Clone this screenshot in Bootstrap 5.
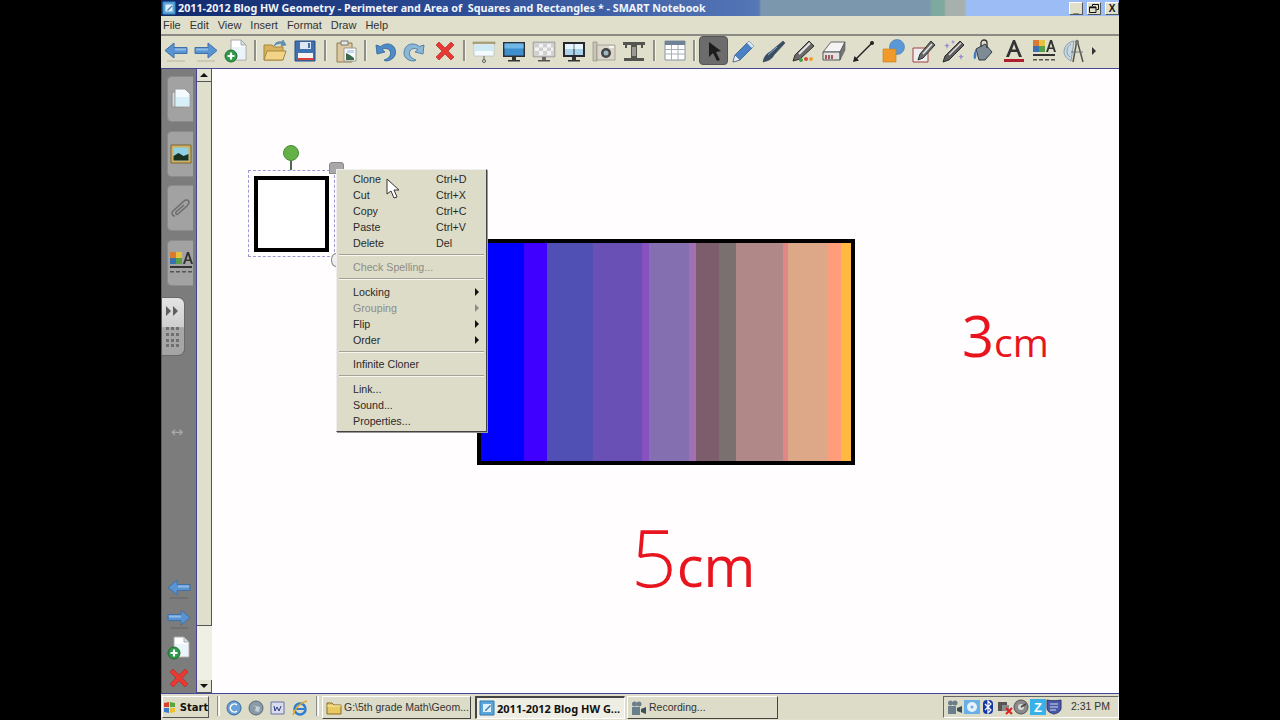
<!DOCTYPE html>
<html lang="en">
<head>
  <meta charset="UTF-8">
  <meta name="viewport" content="width=device-width, initial-scale=1.0">
  <title>SMART Notebook</title>
  <link href="https://cdn.jsdelivr.net/npm/bootstrap@5.3.0/dist/css/bootstrap.min.css" rel="stylesheet">
  <style>
    body {
      background: #000;
      height: 720px;
      overflow: hidden;
      font-family: "Liberation Sans", sans-serif;
      font-size: 11px;
      color: #222;
    }
    .app-window { width: 958px; height: 720px; background: #dfdfcb; }
    .title-bar {
      height: 16px;
      padding-left: 1px;
      color: #f2f4fa;
      font: bold 10.75px "Noto Sans", sans-serif;
      background: linear-gradient(90deg, #10296b 0, #2a4a94 280px, #5375b6 590px, #5a7ab6 598px, #7b97ae 600px, #7b97ae 768px, #7ea99f 772px, #7ea99f 783px, #a8b0ae 785px, #a8b0ae 803px, #9cbcf5 806px);
    }
    .title-icon { margin-right: 2px; }
    .title-btn {
      width: 14px; height: 13px;
      background: #dfdfcb;
      border: 1px solid;
      border-color: #fff #555 #555 #fff;
      color: #111;
      font: bold 10px/11px "Liberation Sans", sans-serif;
      text-align: center;
    }
    .menu-bar { height: 18px; padding-left: 2px; gap: 9px; font-size: 11px; color: #333; }
    .tool-bar {
      height: 35px;
      padding: 0 0 3px 3px;
      gap: 6px;
      border-top: 2px solid #8b8b84;
      border-bottom: 1px solid #45459a;
      background: #dfdfcb;
    }
    .tb-icon { width: 24px; height: 24px; flex: none; }
    .tb-sep { width: 3px; height: 21px; flex: none; border-left: 2px solid #8f8f88; border-right: 1px solid #f3f3e8; }
    .tb-sep-wide { margin: 0 1px; }
    .tb-active {
      width: 29px; height: 29px; flex: none;
      margin: 0 -2px 0 -3px;
      background: #6c6c6c;
      border: 1px solid #555;
      border-radius: 4px;
    }
    .tb-more { width: 0; height: 0; border-left: 4px solid #333; border-top: 4px solid transparent; border-bottom: 4px solid transparent; }
    .main-area { height: 624px; }
    .side-panel {
      width: 35px; flex: none;
      padding: 7px 0 3px;
      background: #7c7c7c;
      border-left: 1px solid #5c5c5c;
    }
    .side-tab {
      width: 26px; height: 46px;
      margin: 0 0 8.5px 5px;
      background: #a2a2a2;
      border: 1px solid #8c8c8c;
      border-right: 0;
      border-radius: 5px 0 0 5px;
    }
    .side-pull {
      width: 23px; height: 59px;
      margin-top: 3px;
      background: linear-gradient(#e4e4e4 0, #cfcfcf 50%, #a8a8a8 52%, #a4a4a4 100%);
      border: 1px solid #6a6a6a;
      border-left: 0;
      border-radius: 0 7px 7px 0;
    }
    .side-resize { height: 18px; margin: 67px 4px 0 0; color: #a9a9a9; font: 15px "DejaVu Sans", sans-serif; }
    .side-nav { gap: 6px; }
    .side-nav svg { width: 24px; height: 24px; }
    .scroll-bar { width: 16px; flex: none; background: #efefe3; border-left: 1px solid #45459a; }
    .scroll-btn {
      height: 13px;
      background: #e4e4d4;
      border-bottom: 1px solid #555;
      border-right: 1px solid #555;
    }
    .scroll-arrow-up { border-left: 4px solid transparent; border-right: 4px solid transparent; border-bottom: 4px solid #111; }
    .scroll-arrow-down { border-left: 4px solid transparent; border-right: 4px solid transparent; border-top: 4px solid #111; }
    .scroll-thumb {
      height: 544px;
      background: #dfdfcb;
      border-right: 1px solid #555;
      border-bottom: 1px solid #555;
    }
    .paper { position: relative; background: #fffdfe; overflow: hidden; border-top: 0; }
    .select-box { position: absolute; left: 36px; top: 101px; width: 87px; height: 87px; border: 1px dashed #9a9ad6; }
    .sq-shape { position: absolute; left: 42px; top: 107px; width: 75px; height: 76px; background: #fff; border: 4px solid #000; }
    .rot-handle { position: absolute; left: 71px; top: 76px; width: 16px; height: 16px; border-radius: 50%; background: #64b247; border: 1px solid #4c8a38; }
    .rot-stem { position: absolute; left: 78px; top: 91px; width: 2px; height: 10px; background: #4f6a52; }
    .menu-handle { position: absolute; left: 117px; top: 93px; width: 15px; height: 12px; background: #a8a8a8; border: 1px solid #888; border-radius: 3px 3px 0 0; }
    .size-handle { position: absolute; left: 119px; top: 184px; width: 10px; height: 14px; border: 1px solid #888; border-radius: 50%; background: #eee; }
    .grad-box {
      position: absolute;
      left: 265px; top: 170px;
      width: 378px; height: 226px;
      border: 4px solid #000;
      background: linear-gradient(90deg,
        #0000ff 0 43px, #3f00ff 43px 66px, #5050b4 66px 112px, #6850b4 112px 161px,
        #8850c0 161px 168px, #8470b0 168px 208px, #a070b0 208px 215px, #7d5c6c 215px 238px,
        #7a7070 238px 255px, #b08888 255px 302px, #e08888 302px 307px, #dca888 307px 347px,
        #ff9c7c 347px 360px, #ffb840 360px);
    }
    .ink-note { position: absolute; color: #e8141e; font-family: "Open Sans", sans-serif; font-weight: 300; line-height: 1; white-space: nowrap; }
    .ink-three { left: 750px; top: 238px; font-size: 56px; font-weight: 400; }
    .ink-three span { font-size: 39px; }
    .ink-five { left: 419px; top: 447px; font-size: 80px; }
    .ink-five span { font-size: 56px; font-weight: 400; }
    .ctx-menu {
      position: absolute;
      left: 124px; top: 100px;
      width: 151px;
      padding: 1px 0 2px;
      background: #dddcc9;
      border-right: 1px solid #444;
      border-bottom: 1px solid #444;
      border-top: 1px solid #eee;
      border-left: 1px solid #eee;
      color: #2a2a2a;
      font-size: 10.7px;
      list-style: none;
      margin: 0;
      box-shadow: 1px 1px 0 #999;
    }
    .ctx-item { height: 16px; line-height: 16px; padding-left: 16px; position: relative; white-space: nowrap; }
    .ctx-key { position: absolute; left: 99px; }
    .ctx-off { color: #8d8d86; }
    .ctx-rule { height: 2px; margin: 3px 2px 3px; background: #a2a298; border-bottom: 1px solid #f7f7ee; }
    .ctx-rule-tall { margin-bottom: 4px; }
    .ctx-sub::after {
      content: ""; position: absolute; left: 138px; top: 4px;
      border-left: 4px solid #111; border-top: 4px solid transparent; border-bottom: 4px solid transparent;
    }
    .ctx-off.ctx-sub::after { border-left-color: #8d8d86; }
    .mouse-arrow { position: absolute; left: 174px; top: 109px; width: 14px; height: 21px; }
    .task-bar {
      height: 26px;
      border-top: 1px solid #45459a;
      background: #dcdcc8;
      padding-top: 2px;
      font-size: 10.5px;
    }
    .start-btn {
      width: 47px; height: 22px;
      margin-left: 1px;
      border: 1px solid; border-color: #fff #555 #555 #fff;
      font: bold 10px "DejaVu Sans", sans-serif;
      color: #111;
    }
    .start-btn svg { flex: none; }
    .task-sep { width: 3px; height: 20px; flex: none; border-left: 1px solid #8f8f88; border-right: 1px solid #fff; background: #eeeee2; }
    .task-btn {
      width: 149px; height: 23px;
      padding-left: 3px;
      gap: 2px;
      flex: none;
      border: 1px solid; border-color: #fff #444 #444 #fff;
      color: #333;
      white-space: nowrap;
      overflow: hidden;
    }
    .task-btn svg { flex: none; }
    .task-active {
      width: 150px;
      margin: 0 2px 0 4px;
      padding-left: 2px;
      border-color: #444 #fff #fff #444;
      border-width: 2px 1px 1px 2px;
      background: #eeeee4;
      color: #111;
      font: bold 11px "Noto Sans", sans-serif;
    }
    .task-rec { width: 151px; }
    .tray-box {
      width: 176px; height: 22px;
      padding-left: 3px;
      border: 1px solid; border-color: #666 #fff #fff #666;
      color: #333;
      white-space: nowrap;
    }
    .tray-box svg { width: 16px; height: 16px; flex: none; margin-right: .5px; }
    .quick-sep-l { margin: 0 6px 0 8px; }
    .quick-sep-r { margin: 0 3px 0 8px; }
    .quick-row { gap: 6px; }
    .quick-row svg { width: 16px; height: 16px; flex: none; }
  </style>
</head>
<body class="m-0">
  <svg class="d-none">
    <symbol id="i-back" viewBox="0 0 24 24"><path d="M1 11.500 10 4v4.500h13v6H10V19z" fill="#5a93d2" stroke="#3f70a8"/><path d="M11 9.500h11v2H11z" fill="#8fbbe6"/><path d="M3 22h18" stroke="#000" stroke-opacity=".12" stroke-width="1.500"/></symbol>
    <symbol id="i-fwd" viewBox="0 0 24 24"><path d="M23 11.500 14 4v4.500H1v6h13V19z" fill="#5a93d2" stroke="#3f70a8"/><path d="M2 9.500h12v2H2z" fill="#8fbbe6"/><path d="M3 22h18" stroke="#000" stroke-opacity=".12" stroke-width="1.500"/></symbol>
    <symbol id="i-new" viewBox="0 0 24 24"><path d="M7 1h10l5 5v15H7z" fill="#fff" stroke="#a8a8a8"/><path d="M17 1v5h5z" fill="#cfe4f3" stroke="#a8a8a8"/><path d="M8 8h13v12H8z" fill="#eaf4fb"/><circle cx="7" cy="17" r="6" fill="#2f9a4a" stroke="#1f6f34"/><path d="M3.500 17h7M7 13.500v7" stroke="#fff" stroke-width="2.200"/></symbol>
    <symbol id="i-x" viewBox="0 0 24 24"><path d="M3 6l3-3 6 6 6-6 3 3-6 6 6 6-3 3-6-6-6 6-3-3 6-6z" fill="#e63a33" stroke="#b82a28" stroke-width=".7"/></symbol>
    <symbol id="i-folder" viewBox="0 0 24 24"><path d="M1 6h8l2 2h9v13H1z" fill="#d9b35c" stroke="#a5873f"/><path d="M1 21l3-9h19l-3 9z" fill="#f1d488" stroke="#a5873f"/><path d="M11 7c1-4 5-5 8-4l1-2 3 5-5 1 1-2c-3-1-6 0-8 2z" fill="#5f93b8" stroke="#3f6c90" stroke-width=".5"/></symbol>
    <symbol id="i-save" viewBox="0 0 24 24"><path d="M2 2h20v20H2z" fill="#3f70b0" stroke="#2a4f84"/><path d="M7 3h11v7H7z" fill="#dfe8f2"/><path d="M15 4h2v5h-2z" fill="#3f70b0"/><path d="M5 14h15v7H5z" fill="#f4f4f4"/><path d="M5 19h15v2H5z" fill="#d8413c"/></symbol>
    <symbol id="i-paste" viewBox="0 0 24 24"><path d="M3 4h15v19H3z" fill="#dcc9a0" stroke="#8e7a52"/><path d="M7 2h7v4H7z" fill="#e8e8e8" stroke="#777"/><path d="M10 9h12v13H10z" fill="#fbfbfb" stroke="#9a9a9a"/><path d="M12 14l4 2 4 3v2h-8z" fill="#3b6a4a"/><path d="M13 11h7v3h-7z" fill="#bcd8ea"/></symbol>
    <symbol id="i-undo" viewBox="0 0 24 24"><path d="M3 6l1 9 8-2-3-2.500c3-2 8-1 8.500 3 .4 3.500-2 6-6.500 7.500l2 1c6-.5 10-4.500 9.500-9.500C22 5 14 2.500 7.500 7.500z" fill="#4c8ac8" stroke="#2f5f94" stroke-width=".8"/></symbol>
    <symbol id="i-redo" viewBox="0 0 24 24"><path d="M21 6l-1 9-8-2 3-2.500c-3-2-8-1-8.500 3-.4 3.500 2 6 6.500 7.500l-2 1C4.500 22 .5 18 1 13 2 5 10 2.500 16.500 7.500z" fill="#8cb8d8" stroke="#3f6f9c" stroke-width=".8"/></symbol>
    <symbol id="i-screen" viewBox="0 0 24 24"><path d="M1 3h22v2H1z" fill="#b8a878" stroke="#8a7c58" stroke-width=".5"/><path d="M2 5h20v12H2z" fill="#f4fbff" stroke="#a8b8bc" stroke-width=".6"/><path d="M3 6h18v6H3z" fill="#cfeaf5"/><path d="M12 17v4" stroke="#666"/><circle cx="12" cy="22" r="1.500" fill="#eee" stroke="#555"/></symbol>
    <symbol id="i-mon-blue" viewBox="0 0 24 24"><path d="M1 3h22v15H1z" fill="#2c2f36"/><path d="M2.500 4.500h19v12h-19z" fill="#3d8fd0"/><path d="M2.500 4.500h19v5h-19z" fill="#6fb7e6"/><path d="M10 18h4v3h-4z" fill="#333"/><path d="M6 21h12v1.500H6z" fill="#333"/></symbol>
    <symbol id="i-mon-check" viewBox="0 0 24 24"><path d="M1 3h22v15H1z" fill="#bbb" stroke="#888" stroke-width=".5"/><path d="M2.500 4.500h19v12h-19z" fill="#f2f2f2"/><path d="M3 5h4v3.500H3zM11 5h4v3.500h-4zM19 5h2.500v3.500H19zM7 8.500h4V12H7zM15 8.500h4V12h-4zM3 12h4v4H3zM11 12h4v4h-4zM19 12h2.500v4H19z" fill="#cfcfcf"/><path d="M10 18h4v3h-4z" fill="#666"/><path d="M6 21h12v1.500H6z" fill="#555"/></symbol>
    <symbol id="i-mon-dual" viewBox="0 0 24 24"><path d="M1 3h22v15H1z" fill="#26282e"/><path d="M3 5h8.500v11H3z" fill="#a9d4ec"/><path d="M12.500 5H21v11h-8.500z" fill="#a9d4ec"/><path d="M3 5h8.500v5H3zM12.500 5H21v5h-8.500z" fill="#e6f4fb"/><path d="M10 18h4v3h-4z" fill="#333"/><path d="M6 21h12v1.500H6z" fill="#333"/></symbol>
    <symbol id="i-camera" viewBox="0 0 24 24"><path d="M1 3h4v19H1z" fill="#c9c3b8" stroke="#8a8478" stroke-width=".6"/><path d="M5 6h18v15H5z" fill="#dbd6cc" stroke="#8a8478" stroke-width=".6"/><circle cx="14" cy="14" r="5" fill="#444"/><circle cx="14" cy="14" r="2.500" fill="#9fb6c4"/><path d="M17 7h5v2h-5z" fill="#f6f6f6"/></symbol>
    <symbol id="i-capture" viewBox="0 0 24 24"><path d="M1 3h22v3H1zM9 6h6v13H9zM2 19h20v3H2z" fill="#55554f"/><path d="M4 6v3M20 6v3" stroke="#55554f" stroke-width="2"/><path d="M10 8h4v9h-4z" fill="#9a9a92"/></symbol>
    <symbol id="i-table" viewBox="0 0 24 24"><path d="M2 2h20v19H2z" fill="#fff" stroke="#8894a0"/><path d="M2 2h20v4H2z" fill="#6f8297"/><path d="M2 10.500h20M2 15h20M8.500 6v15M15 6v15" stroke="#a6afb8"/></symbol>
    <symbol id="i-pointer" viewBox="0 0 24 24"><path d="M7 3l12 9-5 1 4 8-3 1-4-8-4 4z" fill="#1c1c1c"/></symbol>
    <symbol id="i-pen" viewBox="0 0 24 24"><path d="M1 23l2-7L17 2l5 5L8 21z" fill="#4a80c4" stroke="#2a4a7c" stroke-width=".7"/><path d="M15 4l5 5 2-2-5-5z" fill="#dfe8f4"/><path d="M3 16l5 5-7 2z" fill="#e8f0f8" stroke="#2a4a7c" stroke-width=".5"/></symbol>
    <symbol id="i-calli" viewBox="0 0 24 24"><path d="M1 23c1-5 3-8 7-10L21 2l2 2L12 16c-2 4-6 6-11 7z" fill="#3a4f66" stroke="#26364a" stroke-width=".5"/><path d="M6 16l9-8" stroke="#8fb0d0"/></symbol>
    <symbol id="i-cpen" viewBox="0 0 24 24"><path d="M1 22l2-6L17 2l5 5L8 20z" fill="#6a6a6a" stroke="#2f2f2f"/><path d="M7 15L18 4" stroke="#e8e8e8" stroke-width="2"/><circle cx="9" cy="21" r="2" fill="#48a048"/><circle cx="14" cy="20" r="2" fill="#d84a3a"/><circle cx="19" cy="20" r="2" fill="#f0a030"/></symbol>
    <symbol id="i-erase" viewBox="0 0 24 24"><path d="M1 13L9 3h14l-5 10z" fill="#f4f4f4" stroke="#666"/><path d="M1 13h17v8H1z" fill="#e2e2e2" stroke="#555"/><path d="M18 13l5-10v8l-5 10z" fill="#777" stroke="#444" stroke-width=".5"/><path d="M4 16v4M7 16v4M10 16v4" stroke="#8c2b2b" stroke-width="1.500"/></symbol>
    <symbol id="i-line" viewBox="0 0 24 24"><path d="M4 20L20 4" stroke="#222" stroke-width="1.500"/><circle cx="20" cy="4" r="2" fill="#222"/><path d="M1 23l1.500-6 4.500 4.500z" fill="#222"/></symbol>
    <symbol id="i-shape" viewBox="0 0 24 24"><circle cx="15" cy="8" r="7.500" fill="#5a98d6" stroke="#3f78b0" stroke-width=".6"/><path d="M1 10h13v13H1z" fill="#f19a2a" stroke="#c47a1c" stroke-width=".6"/></symbol>
    <symbol id="i-spen" viewBox="0 0 24 24"><path d="M1 9h15v14H1z" fill="#eee" stroke="#a04040" stroke-width="1"/><path d="M6 21l2-6L19 2l4 4L11 19z" fill="#6a6a6a" stroke="#2f2f2f"/><path d="M11 15l9-10" stroke="#e8e8e8" stroke-width="1.500"/></symbol>
    <symbol id="i-magic" viewBox="0 0 24 24"><path d="M1 23l2-6L18 2l4 4L7 21z" fill="#5c5c5c" stroke="#2f2f2f"/><path d="M7 16L19 4" stroke="#e0e0e0" stroke-width="1.500"/><path d="M5 4l1 2 2 .5-2 .8L5 10 4 7.300 2 6.500 4 6z" fill="#9a8ad0"/><path d="M11 1l.7 1.500 1.500.5-1.500.5L11 5l-.7-1.500L9 3l1.300-.5z" fill="#9a8ad0"/><path d="M19 15l1 2 2 .5-2 .8-1 2.700-1-2.700-2-.8 2-.5z" fill="#9a8ad0"/></symbol>
    <symbol id="i-fill" viewBox="0 0 24 24"><path d="M4 10l9-5 7 8-7 8H7z" fill="#7e8a94" stroke="#2f3c48"/><path d="M4 10c-2 3-3 6-2 10 2 1 3-3 2-10z" fill="#3f7cc0"/><path d="M9 8V4a3 3 0 0 1 6 0v5" fill="none" stroke="#333" stroke-width="1.300"/></symbol>
    <symbol id="i-font" viewBox="0 0 24 24"><path d="M4 18L11 1h2l7 17h-3l-2-5H9l-2 5zM10 10.500h4L12 5z" fill="#333"/><path d="M2 20h20v3H2z" fill="#b01e2e"/></symbol>
    <symbol id="i-props" viewBox="0 0 24 24"><path d="M1 1h6v6H1z" fill="#d87a30"/><path d="M7 1h6v6H7z" fill="#e8c040"/><path d="M1 7h6v6H1z" fill="#3a6fb0"/><path d="M7 7h6v6H7z" fill="#58a048"/><path d="M14 13L18 1h2l4 12h-2l-1-3h-4l-1 3zM17.500 8.500h3L19 4z" fill="#333"/><path d="M1 15h22v2H1z" fill="#333"/><path d="M1 20h4v1.500H1zM7 20h4v1.500H7zM13 20h4v1.500h-4zM19 20h4v1.500h-4z" fill="#555"/></symbol>
    <symbol id="i-measure" viewBox="0 0 24 24"><path d="M12 2A11 11 0 0 0 2 12c0 5 3 8 7 10z" fill="#c8d8e2" stroke="#8aa0ac"/><path d="M9 5A8 8 0 0 0 5 12c0 3 1 5 3 6" fill="none" stroke="#8aa0ac"/><path d="M15 1l-4 22M15 1l6 22" stroke="#555" stroke-width="1.500" fill="none"/><path d="M9 13h12" stroke="#777"/><circle cx="15" cy="3" r="2" fill="#777"/></symbol>
    <symbol id="i-note" viewBox="0 0 16 16"><path d="M1 1h14v14H1z" fill="#5aa6dc" stroke="#2f78ae"/><path d="M4 4h8v8H4z" fill="#dff0fa"/><path d="M6 10l5-5 1 1-5 5H6z" fill="#3f7cb0"/></symbol>
  </svg>

  <div class="app-window mx-auto d-flex flex-column">
    <div class="title-bar d-flex align-items-center">
      <svg width="14" height="14" class="title-icon flex-shrink-0"><use href="#i-note"/></svg>
      <span class="flex-grow-1 text-truncate">2011-2012 Blog HW Geometry - Perimeter and Area of&nbsp; Squares and Rectangles * - SMART Notebook</span>
      <div class="d-flex gap-1">
        <div class="title-btn">_</div>
        <div class="title-btn d-flex align-items-center justify-content-center">
          <svg width="10" height="9" viewBox="0 0 10 9"><path d="M3.500 2V.5h6v5H7.500M.5 3h6.500v5.500H.5z" fill="none" stroke="#111"/><path d="M.5 3.500h6.500" stroke="#111" stroke-width="1.500"/></svg>
        </div>
        <div class="title-btn">X</div>
      </div>
    </div>

    <div class="menu-bar d-flex align-items-center">
      <span>File</span><span>Edit</span><span>View</span><span>Insert</span><span>Format</span><span>Draw</span><span>Help</span>
    </div>

    <div class="tool-bar d-flex align-items-center">
      <svg class="tb-icon"><use href="#i-back"/></svg>
      <svg class="tb-icon"><use href="#i-fwd"/></svg>
      <svg class="tb-icon"><use href="#i-new"/></svg>
      <div class="tb-sep"></div>
      <svg class="tb-icon"><use href="#i-folder"/></svg>
      <svg class="tb-icon"><use href="#i-save"/></svg>
      <div class="tb-sep tb-sep-wide"></div>
      <svg class="tb-icon"><use href="#i-paste"/></svg>
      <div class="tb-sep"></div>
      <svg class="tb-icon"><use href="#i-undo"/></svg>
      <svg class="tb-icon"><use href="#i-redo"/></svg>
      <svg class="tb-icon"><use href="#i-x"/></svg>
      <div class="tb-sep"></div>
      <svg class="tb-icon"><use href="#i-screen"/></svg>
      <svg class="tb-icon"><use href="#i-mon-blue"/></svg>
      <svg class="tb-icon"><use href="#i-mon-check"/></svg>
      <svg class="tb-icon"><use href="#i-mon-dual"/></svg>
      <svg class="tb-icon"><use href="#i-camera"/></svg>
      <svg class="tb-icon"><use href="#i-capture"/></svg>
      <div class="tb-sep tb-sep-wide"></div>
      <svg class="tb-icon"><use href="#i-table"/></svg>
      <div class="tb-sep"></div>
      <div class="tb-active d-flex align-items-center justify-content-center"><svg class="tb-icon"><use href="#i-pointer"/></svg></div>
      <svg class="tb-icon"><use href="#i-pen"/></svg>
      <svg class="tb-icon"><use href="#i-calli"/></svg>
      <svg class="tb-icon"><use href="#i-cpen"/></svg>
      <svg class="tb-icon"><use href="#i-erase"/></svg>
      <svg class="tb-icon"><use href="#i-line"/></svg>
      <svg class="tb-icon"><use href="#i-shape"/></svg>
      <svg class="tb-icon"><use href="#i-spen"/></svg>
      <svg class="tb-icon"><use href="#i-magic"/></svg>
      <svg class="tb-icon"><use href="#i-fill"/></svg>
      <svg class="tb-icon"><use href="#i-font"/></svg>
      <svg class="tb-icon"><use href="#i-props"/></svg>
      <svg class="tb-icon"><use href="#i-measure"/></svg>
      <div class="tb-more"></div>
    </div>

    <div class="main-area d-flex">
      <div class="side-panel d-flex flex-column">
        <div class="side-tab d-flex align-items-center justify-content-center">
          <svg width="22" height="24" viewBox="0 0 22 24"><path d="M2 5h12v15H2z" fill="#cfd8dc" stroke="#8a8a8a"/><path d="M5 2h10l5 5v13H5z" fill="#f4fafd" stroke="#9a9a9a"/><path d="M6 10h13v9H6z" fill="#d6eff8"/></svg>
        </div>
        <div class="side-tab d-flex align-items-center justify-content-center">
          <svg width="22" height="20" viewBox="0 0 22 20"><path d="M1 1h20v18H1z" fill="#d2b060" stroke="#7c6430"/><path d="M3.500 3.500h15v13h-15z" fill="#8fd0e4"/><path d="M3.500 12l5-3 5 3 5-2v6.500h-15z" fill="#1a3020"/></svg>
        </div>
        <div class="side-tab d-flex align-items-center justify-content-center">
          <svg width="22" height="22" viewBox="0 0 22 22"><path d="M5 19c-3 0-4-3-2-5L14 4c2-2 5-1 5 1 0 2-1 3-2 4L8 17c-1 1-3 0-2-2L14 8" fill="none" stroke="#6c6c6c" stroke-width="1.500"/></svg>
        </div>
        <div class="side-tab d-flex align-items-center justify-content-center">
          <svg width="24" height="24"><use href="#i-props"/></svg>
        </div>
        <div class="side-pull d-flex flex-column align-items-center">
          <svg width="16" height="28" viewBox="0 0 16 28"><path d="M1 8l5 5-5 5zM8 8l5 5-5 5z" fill="#5f5f5f"/></svg>
          <svg width="16" height="22" viewBox="0 0 16 22" fill="#707070"><path d="M1 1h3v3H1zM6 1h3v3H6zM11 1h3v3h-3zM1 7h3v3H1zM6 7h3v3H6zM11 7h3v3h-3zM1 13h3v3H1zM6 13h3v3H6zM11 13h3v3h-3zM1 18h3v3H1zM6 18h3v3H6zM11 18h3v3h-3z"/></svg>
        </div>
        <div class="side-resize text-center">&#8596;</div>
        <div class="side-nav mt-auto d-flex flex-column align-items-center">
          <svg><use href="#i-back"/></svg>
          <svg><use href="#i-fwd"/></svg>
          <svg><use href="#i-new"/></svg>
          <svg><use href="#i-x"/></svg>
        </div>
      </div>

      <div class="scroll-bar d-flex flex-column">
        <div class="scroll-btn d-flex align-items-center justify-content-center"><div class="scroll-arrow-up"></div></div>
        <div class="scroll-thumb"></div>
        <div class="scroll-btn mt-auto d-flex align-items-center justify-content-center"><div class="scroll-arrow-down"></div></div>
      </div>

      <div class="paper flex-grow-1">
        <div class="grad-box"></div>
        <div class="select-box"></div>
        <div class="sq-shape"></div>
        <div class="rot-stem"></div>
        <div class="rot-handle"></div>
        <div class="menu-handle"></div>
        <div class="size-handle"></div>
        <div class="ink-note ink-three">3<span>cm</span></div>
        <div class="ink-note ink-five">5<span>cm</span></div>

        <ul class="ctx-menu">
          <li class="ctx-item">Clone<span class="ctx-key">Ctrl+D</span></li>
          <li class="ctx-item">Cut<span class="ctx-key">Ctrl+X</span></li>
          <li class="ctx-item">Copy<span class="ctx-key">Ctrl+C</span></li>
          <li class="ctx-item">Paste<span class="ctx-key">Ctrl+V</span></li>
          <li class="ctx-item">Delete<span class="ctx-key">Del</span></li>
          <li class="ctx-rule"></li>
          <li class="ctx-item ctx-off">Check Spelling...</li>
          <li class="ctx-rule ctx-rule-tall"></li>
          <li class="ctx-item ctx-sub">Locking</li>
          <li class="ctx-item ctx-sub ctx-off">Grouping</li>
          <li class="ctx-item ctx-sub">Flip</li>
          <li class="ctx-item ctx-sub">Order</li>
          <li class="ctx-rule"></li>
          <li class="ctx-item">Infinite Cloner</li>
          <li class="ctx-rule ctx-rule-tall"></li>
          <li class="ctx-item">Link...</li>
          <li class="ctx-item">Sound...</li>
          <li class="ctx-item">Properties...</li>
        </ul>

        <svg class="mouse-arrow" viewBox="0 0 14 21"><path d="M1 1v15l4-3 3 7 3-1-3-7h5z" fill="#fff" stroke="#333"/></svg>
      </div>
    </div>

    <div class="task-bar d-flex align-items-start">
      <div class="start-btn d-flex align-items-center justify-content-center gap-1">
        <svg width="13" height="13" viewBox="0 0 13 13"><path d="M1 2l5-1v5H1z" fill="#d8452c"/><path d="M7 1l5 1v4H7z" fill="#5aa83c"/><path d="M1 7h5v5l-5-1z" fill="#3f7cd0"/><path d="M7 7h5v4l-5 1z" fill="#eec02c"/></svg>
        <span>Start</span>
      </div>
      <div class="task-sep quick-sep-l"></div>
      <div class="quick-row d-flex align-items-center mt-1">
        <svg viewBox="0 0 16 16"><circle cx="8" cy="8" r="7" fill="#6aa0d8" stroke="#3a6aa0"/><path d="M11 5a4 4 0 1 0 0 6" fill="none" stroke="#fff" stroke-width="1.500"/></svg>
        <svg viewBox="0 0 16 16"><circle cx="8" cy="8" r="7" fill="#8a9aa8" stroke="#5a6a78"/><path d="M4 5l4 2-1 4 4 1 1-5" fill="#c4d0d8"/></svg>
        <svg viewBox="0 0 16 16"><path d="M1 2h13v12H1z" fill="#d8dcec" stroke="#6a70a0"/><path d="M4 6l1 5 2-4 2 4 2-5" fill="none" stroke="#2a3a88"/></svg>
        <svg viewBox="0 0 16 16"><circle cx="8" cy="9" r="5.500" fill="none" stroke="#2f7cd0" stroke-width="2.500"/><path d="M4 9h8" stroke="#2f7cd0" stroke-width="2"/><path d="M1 15C3 8 9 2 15 1" fill="none" stroke="#e0a828" stroke-width="1.500"/></svg>
      </div>
      <div class="task-sep quick-sep-r"></div>
      <div class="task-btn d-flex align-items-center">
        <svg width="16" height="14" viewBox="0 0 16 14"><path d="M1 2h5l2 2h7v9H1z" fill="#e8c860" stroke="#8a6c28"/><path d="M1 5h14" stroke="#f8eeb0"/></svg>
        <span>G:\5th grade Math\Geom...</span>
      </div>
      <div class="task-btn task-active d-flex align-items-center">
        <svg width="16" height="16"><use href="#i-note"/></svg>
        <span>2011-2012 Blog HW G...</span>
      </div>
      <div class="task-btn task-rec d-flex align-items-center">
        <svg width="16" height="16" viewBox="0 0 16 16"><path d="M1 7h8v8H1z" fill="#6a7f8c"/><circle cx="3.500" cy="4" r="2.500" fill="#6a7f8c"/><circle cx="8" cy="4" r="2.500" fill="#6a7f8c"/><path d="M10 9l5-2v7l-5-2z" fill="#3a4f5c"/></svg>
        <span>Recording...</span>
      </div>
      <div class="tray-box d-flex align-items-center ms-auto">
        <svg viewBox="0 0 16 16"><path d="M1 7h8v8H1z" fill="#6a7f8c"/><circle cx="3.500" cy="4" r="2.500" fill="#6a7f8c"/><circle cx="8" cy="4" r="2.500" fill="#6a7f8c"/><path d="M10 9l5-2v7l-5-2z" fill="#3a4f5c"/></svg>
        <svg viewBox="0 0 16 16"><path d="M0 1h16v14H0z" fill="#6ab0e8"/><circle cx="8" cy="8" r="5" fill="#e8f2fa"/><circle cx="8" cy="8" r="1.500" fill="#6ab0e8"/></svg>
        <svg viewBox="0 0 16 16"><rect x="3" y="1" width="10" height="14" rx="4" fill="#1438a8"/><path d="M5 5l6 6-3 3V2l3 3-6 6" fill="none" stroke="#fff" stroke-width="1.200"/></svg>
        <svg viewBox="0 0 16 16"><path d="M1 3h9v9H1z" fill="#555"/><path d="M5 6h7v6H5z" fill="#8a8a8a"/><path d="M9 9l6 6M15 9l-6 6" stroke="#e02020" stroke-width="2"/></svg>
        <svg viewBox="0 0 16 16"><circle cx="8" cy="8" r="7" fill="#8a8a8a" stroke="#555"/><circle cx="8" cy="8" r="3" fill="#d8d8d8"/><path d="M8 8l5-3" stroke="#444" stroke-width="1.500"/></svg>
        <svg viewBox="0 0 16 16"><path d="M0 0h16v16H0z" fill="#3ab0e8"/><text x="8" y="13" text-anchor="middle" font-family="Liberation Sans" font-size="13" font-weight="bold" fill="#fff">Z</text></svg>
        <svg viewBox="0 0 16 16"><path d="M1 1c4 1 10 1 14 0v8c0 3-3 5-7 6-4-1-7-3-7-6z" fill="#4a5aa8" stroke="#2a3470"/><path d="M4 5h8M4 8h8M4 11h6" stroke="#cfd8ee"/></svg>
        <span class="ms-auto me-2">2:31 PM</span>
      </div>
    </div>
  </div>

  <script src="https://cdn.jsdelivr.net/npm/bootstrap@5.3.0/dist/js/bootstrap.bundle.min.js"></script>
</body>
</html>
